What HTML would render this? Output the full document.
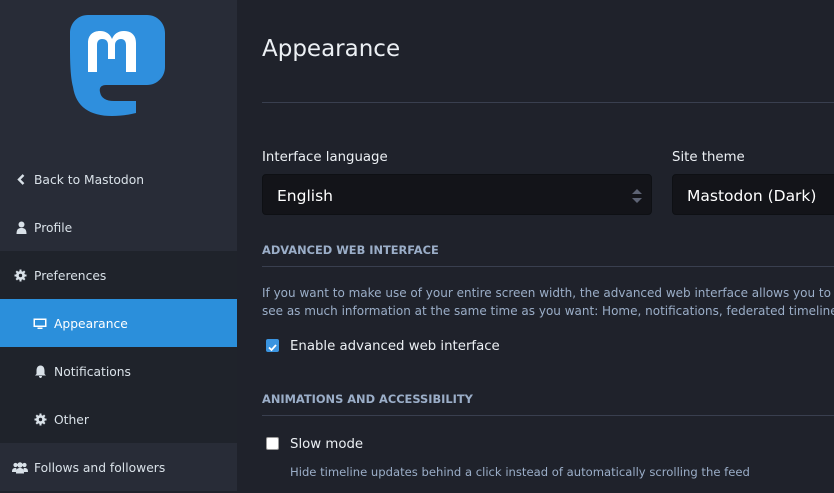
<!DOCTYPE html>
<html><head><style>
*{margin:0;padding:0;box-sizing:border-box}
body{width:834px;height:491px;overflow:hidden;background:#1f222b;font-family:"DejaVu Sans","Liberation Sans",sans-serif;color:#d9e1e8;position:relative}
.side{position:absolute;left:0;top:0;width:237px;height:491px;background:#282c37}
.item{position:absolute;left:0;width:237px;height:48px;font-size:12.3px;color:#d9e1e8;line-height:50px}
.item span{position:absolute;top:0}
.ic{position:absolute;top:18px;width:13px;height:13px;fill:#d9e1e8}
.sub{background:#1f232b}
h1{position:absolute;left:262px;top:36px;font-weight:normal;font-size:23px;color:#ecf0f4}
.hr{position:absolute;left:262px;right:0;height:1px;background:#393f4f}
.lbl{position:absolute;font-size:13.3px;color:#ecf0f4}
.sel{position:absolute;top:174px;height:41px;background:#131419;border:1px solid #0e1014;border-radius:4px;font-size:15.5px;color:#fff;padding-left:14px;line-height:42px}
.hd{position:absolute;left:262px;font-size:11.4px;font-weight:bold;color:#9baec8}
.p{position:absolute;left:262px;font-size:12px;color:#9baec8;line-height:18px;white-space:nowrap}
.cb{position:absolute;width:13px;height:13px;border-radius:2px}
</style></head><body>
<div class="side">
<svg style="position:absolute;left:70px;top:15px" width="95" height="101" viewBox="0 0 95 101">
<path d="M18 0h59c10 0 18 8 18 18v34c0 10-8 18-18 18H36c-5 0-7 3-6 7 1 6 6 9 14 9h22v12c-8 2-16 3-24 3C20 101 6 92 3 72 0 60 0 42 0 30V18C0 8 8 0 18 0z" fill="#2f8fdd"/>
<path d="M18 57V28c0-8 5-12 12-12 6 0 10 3 12 8 2-5 6-8 12-8 7 0 12 4 12 12v29h-10V30c0-4-2-6-5-6s-6 2-6 6v14h-7V30c0-4-2-6-6-6-3 0-5 2-5 6v27z" fill="#fff"/>
</svg>
<div class="item" style="top:155px"><svg class="ic" style="left:15px" viewBox="0 0 12 13"><path d="M8 2L3.5 6.5 8 11" stroke="#d9e1e8" stroke-width="2.4" fill="none"/></svg><span style="left:34px">Back to Mastodon</span></div>
<div class="item" style="top:203px"><svg class="ic" style="left:15px" viewBox="0 0 12 13"><circle cx="6" cy="3.5" r="3"/><path d="M1 13c0-5 2-6 5-6s5 1 5 6z"/></svg><span style="left:34px">Profile</span></div>
<div class="item sub" style="top:251px"><svg class="ic" style="left:14px" viewBox="0 0 12 13"><g fill="#d9e1e8"><circle cx="6" cy="6.5" r="4.5"/><rect x="5" y="0.5" width="2" height="12"/><rect x="0" y="5.5" width="12" height="2"/><rect x="5" y="0.5" width="2" height="12" transform="rotate(45 6 6.5)"/><rect x="5" y="0.5" width="2" height="12" transform="rotate(-45 6 6.5)"/></g><circle cx="6" cy="6.5" r="1.7" fill="#1f232b"/></svg><span style="left:34px">Preferences</span></div>
<div class="item" style="top:299px;background:#2b8fdb;color:#fff"><svg class="ic" style="left:33px;fill:#fff;width:14px" viewBox="0 0 13 13"><path d="M0 1.5h13v8.5H0z M1.5 3v5.5h10V3z" fill-rule="evenodd"/><path d="M4 10.5h5V12H4z"/></svg><span style="left:54px">Appearance</span></div>
<div class="item sub" style="top:347px"><svg class="ic" style="left:34px" viewBox="0 0 12 13"><path d="M6 0.5c3 0 4 2.5 4 5.5v3l1.5 1.5H.5L2 9V6c0-3 1-5.5 4-5.5zM4.5 11h3c0 1-.5 2-1.5 2s-1.5-1-1.5-2z"/></svg><span style="left:54px">Notifications</span></div>
<div class="item sub" style="top:395px"><svg class="ic" style="left:34px" viewBox="0 0 12 13"><g fill="#d9e1e8"><circle cx="6" cy="6.5" r="4.5"/><rect x="5" y="0.5" width="2" height="12"/><rect x="0" y="5.5" width="12" height="2"/><rect x="5" y="0.5" width="2" height="12" transform="rotate(45 6 6.5)"/><rect x="5" y="0.5" width="2" height="12" transform="rotate(-45 6 6.5)"/></g><circle cx="6" cy="6.5" r="1.7" fill="#1f232b"/></svg><span style="left:54px">Other</span></div>
<div class="item" style="top:443px"><svg class="ic" style="left:12px;width:16px" viewBox="0 0 16 13"><circle cx="8" cy="4" r="2.7"/><circle cx="3.5" cy="4" r="2.1"/><circle cx="12.5" cy="4" r="2.1"/><path d="M4 12.5c0-4.5 1.5-5.5 4-5.5s4 1 4 5.5zM0 11c0-3 1-4 3.5-4 1 0 1.5 1 .5 4zM16 11c0-3-1-4-3.5-4-1 0-1.5 1-.5 4z"/></svg><span style="left:34px">Follows and followers</span></div>
</div>
<h1>Appearance</h1>
<div class="hr" style="top:102px"></div>
<div class="lbl" style="left:262px;top:150px">Interface language</div>
<div class="lbl" style="left:672px;top:150px">Site theme</div>
<div class="sel" style="left:262px;width:390px">English<svg style="position:absolute;right:8px;top:13px" width="12" height="16" viewBox="0 0 12 16"><path d="M6 1l5 5H1zM6 15l5-5H1z" fill="#5d6374"/></svg></div>
<div class="sel" style="left:672px;width:180px">Mastodon (Dark)</div>
<div class="hd" style="top:243px">ADVANCED WEB INTERFACE</div>
<div class="hr" style="top:266px"></div>
<div class="p" style="top:284px">If you want to make use of your entire screen width, the advanced web interface allows you to<br>see as much information at the same time as you want: Home, notifications, federated timeline</div>
<div class="cb" style="left:266px;top:339px;background:#3a94e0"><svg width="13" height="13" viewBox="0 0 13 13"><path d="M3 6.5l2.5 2.5 4.5-5" stroke="#fff" stroke-width="1.8" fill="none"/></svg></div>
<div class="lbl" style="left:290px;top:339px">Enable advanced web interface</div>
<div class="hd" style="top:392px">ANIMATIONS AND ACCESSIBILITY</div>
<div class="hr" style="top:415px"></div>
<div class="cb" style="left:266px;top:437px;background:#fff;border:1px solid #999"></div>
<div class="lbl" style="left:290px;top:437px">Slow mode</div>
<div class="p" style="left:290px;top:463px;font-size:11.6px">Hide timeline updates behind a click instead of automatically scrolling the feed</div>
</body></html>
